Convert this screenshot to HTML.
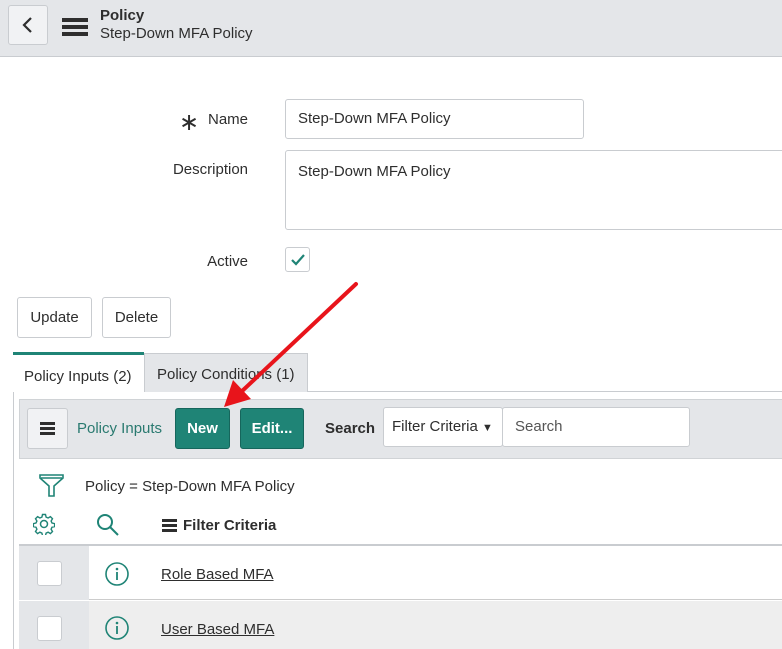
<!DOCTYPE html>
<html><head><style>
*{box-sizing:border-box;margin:0;padding:0}
body{width:782px;height:649px;overflow:hidden;background:#fff;font-family:"Liberation Sans",sans-serif;color:#2e2e2e;position:relative;font-size:15px}
.a{position:absolute}
.hdr{left:0;top:0;width:782px;height:57px;background:#e4e6e9;border-bottom:1px solid #c9ccd0}
.btn{position:absolute;border:1px solid #c9ccd0;border-radius:3px;background:#fff;font-size:15px;display:flex;align-items:center;justify-content:center}
.inp{position:absolute;border:1px solid #c9ccd0;border-radius:3px;background:#fff;font-size:15px;padding-left:12px}
.lbl{position:absolute;font-size:15px;text-align:right;width:120px}
.grn{background:#1f8476;color:#fff;border:1px solid #16665c;font-weight:bold}
.ham{position:absolute}
.ham i{display:block;height:3px;background:#2e2e2e;margin-bottom:3px}
u{color:#2e2e2e;text-decoration:underline}
</style></head><body>
<div class="a hdr"></div>
<div class="btn" style="left:8px;top:5px;width:40px;height:40px;background:#f1f2f4">
<svg width="14" height="18" viewBox="0 0 14 18"><path d="M10 2L3 9l7 7" fill="none" stroke="#2e2e2e" stroke-width="2.2"/></svg></div>
<div class="ham" style="left:62px;top:18px;width:26px"><i style="height:4px;margin-bottom:3px"></i><i style="height:4px;margin-bottom:3px"></i><i style="height:4px"></i></div>
<div class="a" style="left:100px;top:7px;font-weight:bold;font-size:15px">Policy</div>
<div class="a" style="left:100px;top:25px;font-size:15px">Step-Down MFA Policy</div>

<div class="a" style="left:179px;top:108px;font-size:24px">∗</div>
<div class="lbl" style="left:128px;top:111px">Name</div>
<div class="inp" style="left:285px;top:99px;width:299px;height:40px;line-height:38px">Step-Down MFA Policy</div>
<div class="lbl" style="left:128px;top:161px">Description</div>
<div class="inp" style="left:285px;top:150px;width:510px;height:80px;padding-top:12px">Step-Down MFA Policy</div>
<div class="lbl" style="left:128px;top:253px">Active</div>
<div class="btn" style="left:285px;top:247px;width:25px;height:25px">
<svg width="16" height="14" viewBox="0 0 16 14"><path d="M2 7l4 4 8-9" fill="none" stroke="#1f8476" stroke-width="2.2"/></svg></div>
<div class="btn" style="left:17px;top:297px;width:75px;height:41px">Update</div>
<div class="btn" style="left:102px;top:297px;width:69px;height:41px">Delete</div>

<div class="a" style="left:13px;top:391px;width:1px;height:258px;background:#c9ccd0"></div>
<div class="a" style="left:144px;top:391px;width:640px;height:1px;background:#c9ccd0"></div>
<div class="a" style="left:13px;top:352px;width:131px;height:40px;border-top:3px solid #1f8476;background:#fff;padding:13px 0 0 11px">Policy Inputs (2)</div>
<div class="a" style="left:144px;top:353px;width:164px;height:39px;background:#e4e6e9;border:1px solid #c9ccd0;border-bottom:none;padding:12px 0 0 12px">Policy Conditions (1)</div>

<div class="a" style="left:19px;top:399px;width:770px;height:60px;background:#e4e6e9;border:1px solid #d0d3d6"></div>
<div class="btn" style="left:27px;top:408px;width:41px;height:41px;background:#f1f2f4"><div style="width:15px"><div style="height:3px;background:#2e2e2e;margin-bottom:2px"></div><div style="height:3px;background:#2e2e2e;margin-bottom:2px"></div><div style="height:3px;background:#2e2e2e"></div></div></div>
<div class="a" style="left:77px;top:420px;color:#2a7a70">Policy Inputs</div>
<div class="btn grn" style="left:175px;top:408px;width:55px;height:41px">New</div>
<div class="btn grn" style="left:240px;top:408px;width:64px;height:41px">Edit...</div>
<div class="a" style="left:325px;top:420px;font-weight:bold">Search</div>
<div class="inp" style="left:383px;top:407px;width:120px;height:40px;line-height:38px;padding-left:8px">Filter Criteria <span style="font-size:11px">▼</span></div>
<div class="inp" style="left:502px;top:407px;width:188px;height:40px;line-height:38px;color:#555">Search</div>

<svg class="a" style="left:39px;top:474px" width="25" height="26" viewBox="0 0 25 26"><path d="M1 1h23v3l-9 8v10h-5V12L1 4z" fill="none" stroke="#1f8476" stroke-width="1.6"/><path d="M2 4h21" stroke="#1f8476" stroke-width="1.4"/></svg>
<div class="a" style="left:85px;top:478px">Policy = Step-Down MFA Policy</div>
<svg class="a" style="left:33px;top:513px" width="22" height="22" viewBox="0 0 22 22"><circle cx="11" cy="11" r="3.5" fill="none" stroke="#1f8476" stroke-width="1.5"/><path d="M9.5 1.5h3l.6 2.6 2 .9 2.3-1.4 2.1 2.1-1.4 2.3.9 2 2.6.6v3l-2.6.6-.9 2 1.4 2.3-2.1 2.1-2.3-1.4-2 .9-.6 2.6h-3l-.6-2.6-2-.9-2.3 1.4-2.1-2.1 1.4-2.3-.9-2-2.6-.6v-3l2.6-.6.9-2-1.4-2.3 2.1-2.1 2.3 1.4 2-.9z" fill="none" stroke="#1f8476" stroke-width="1.4"/></svg>
<svg class="a" style="left:96px;top:513px" width="24" height="24" viewBox="0 0 24 24"><circle cx="9" cy="9" r="7" fill="none" stroke="#1f8476" stroke-width="2"/><path d="M14 14l8 8" stroke="#1f8476" stroke-width="2"/></svg>
<div class="a" style="left:162px;top:519px;width:15px"><div style="height:3px;background:#2e2e2e;margin-bottom:2px"></div><div style="height:3px;background:#2e2e2e;margin-bottom:2px"></div><div style="height:3px;background:#2e2e2e"></div></div>
<div class="a" style="left:183px;top:517px;font-weight:bold">Filter Criteria</div>
<div class="a" style="left:19px;top:544px;width:770px;height:2px;background:#c9ccd0"></div>

<div class="a" style="left:19px;top:546px;width:770px;height:54px;background:#fff;border-bottom:1px solid #ccc"></div>
<div class="a" style="left:19px;top:546px;width:70px;height:54px;background:#e4e6e9"></div>
<div class="a" style="left:19px;top:601px;width:770px;height:48px;background:#eeeeee"></div>
<div class="a" style="left:19px;top:601px;width:70px;height:48px;background:#e4e6e9"></div>
<div class="btn" style="left:37px;top:561px;width:25px;height:25px"></div>
<div class="btn" style="left:37px;top:616px;width:25px;height:25px"></div>
<svg class="a" style="left:104px;top:561px" width="26" height="26" viewBox="0 0 26 26"><circle cx="13" cy="13" r="11" fill="none" stroke="#1f8476" stroke-width="1.6"/><circle cx="13" cy="8" r="1.3" fill="#1f8476"/><path d="M13 11v8" stroke="#1f8476" stroke-width="1.8"/></svg>
<svg class="a" style="left:104px;top:615px" width="26" height="26" viewBox="0 0 26 26"><circle cx="13" cy="13" r="11" fill="none" stroke="#1f8476" stroke-width="1.6"/><circle cx="13" cy="8" r="1.3" fill="#1f8476"/><path d="M13 11v8" stroke="#1f8476" stroke-width="1.8"/></svg>
<div class="a" style="left:161px;top:566px"><u>Role Based MFA</u></div>
<div class="a" style="left:161px;top:621px"><u>User Based MFA</u></div>

<svg class="a" style="left:0;top:0" width="782" height="649"><path d="M356 284L240 393" stroke="#e8141b" stroke-width="4" stroke-linecap="round"/><path d="M224 407l9-27 18 19z" fill="#e8141b"/></svg>
</body></html>
